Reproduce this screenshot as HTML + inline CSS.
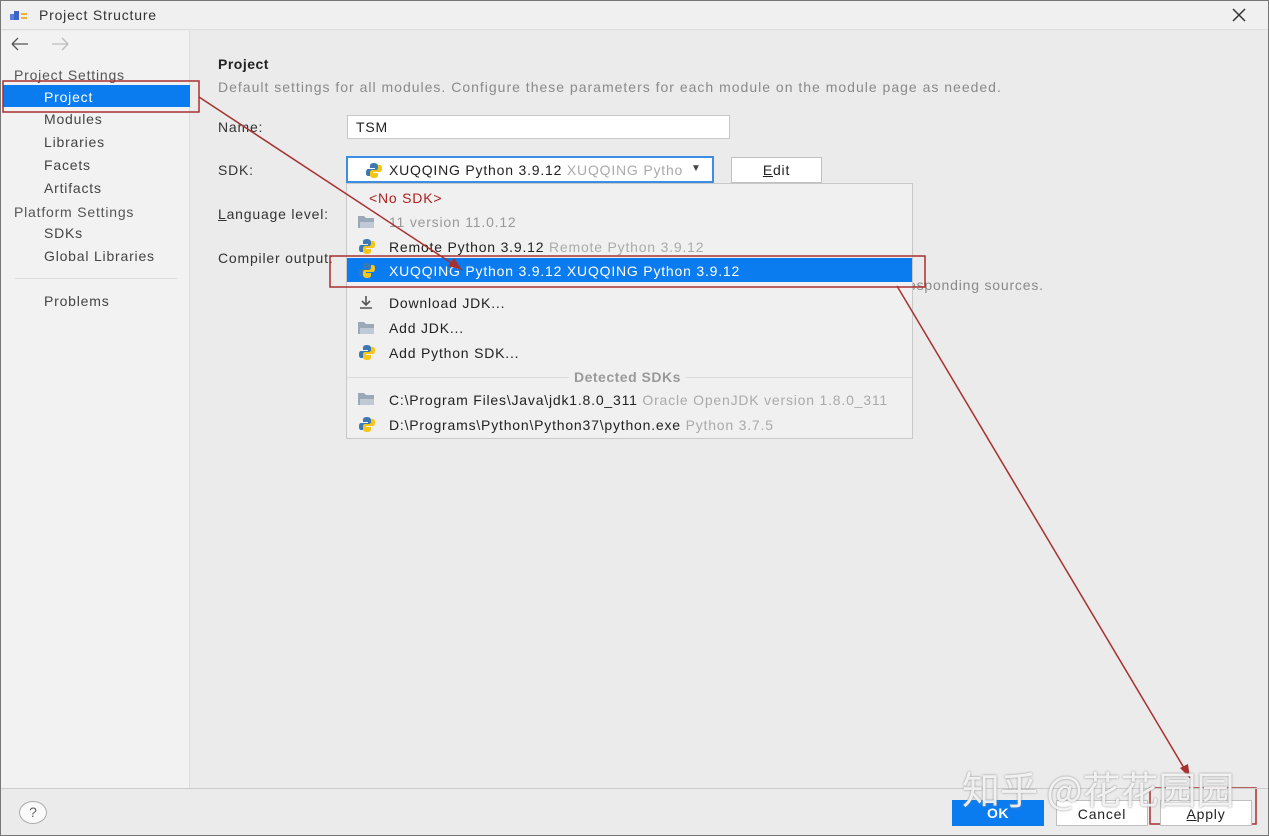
<!DOCTYPE html>
<html><head><meta charset="utf-8"><style>
*{margin:0;padding:0;box-sizing:border-box}
body{width:1269px;height:836px;overflow:hidden;background:#ebebeb;font-family:"Liberation Sans","Noto Sans CJK SC",sans-serif;font-size:14px;letter-spacing:0.8px;color:#222;position:relative}
.a{position:absolute;white-space:nowrap}
.g{color:#8a8a8a}
</style></head><body>
<div class="a" style="left:0;top:0;width:1269px;height:836px;border:1px solid #777"></div>
<div class="a" style="left:1px;top:1px;width:1267px;height:29px;background:#f0f0f0;border-bottom:1px solid #ddd"></div>
<svg class="a" style="left:10px;top:9px" width="20" height="12"><rect x="0" y="5" width="4" height="6" fill="#5b7fd6"/><rect x="4" y="2" width="5" height="9" fill="#3d63c8"/><rect x="11" y="4" width="6" height="2" fill="#f0b030"/><rect x="11" y="8" width="6" height="2" fill="#f0b030"/></svg>
<div class="a" style="left:39px;top:7px;font-size:14px;color:#333">Project Structure</div>
<svg class="a" style="left:1232px;top:8px" width="14" height="14"><path d="M1 1L13 13M13 1L1 13" stroke="#333" stroke-width="1.5"/></svg>
<div class="a" style="left:1px;top:31px;width:189px;height:757px;background:#f2f2f2;border-right:1px solid #ddd"></div>
<svg class="a" style="left:10px;top:37px" width="60" height="14"><path d="M2 7H18M2 7L8 1M2 7L8 13" stroke="#555" stroke-width="1.3" fill="none"/><path d="M42 7H58M58 7L52 1M58 7L52 13" stroke="#bbb" stroke-width="1.3" fill="none"/></svg>
<div class="a" style="left:14px;top:67px;color:#555">Project Settings</div>
<div class="a" style="left:3px;top:85px;width:187px;height:22px;background:#0a7cf0"></div>
<div class="a" style="left:44px;top:89px;color:#fff">Project</div>
<div class="a" style="left:44px;top:111px;color:#444">Modules</div>
<div class="a" style="left:44px;top:134px;color:#444">Libraries</div>
<div class="a" style="left:44px;top:157px;color:#444">Facets</div>
<div class="a" style="left:44px;top:180px;color:#444">Artifacts</div>
<div class="a" style="left:14px;top:204px;color:#555">Platform Settings</div>
<div class="a" style="left:44px;top:225px;color:#444">SDKs</div>
<div class="a" style="left:44px;top:248px;color:#444">Global Libraries</div>
<div class="a" style="left:15px;top:278px;width:162px;height:1px;background:#ddd"></div>
<div class="a" style="left:44px;top:293px;color:#444">Problems</div>

<div class="a" style="left:218px;top:56px;font-weight:bold;letter-spacing:0.5px">Project</div>
<div class="a g" style="left:218px;top:79px;letter-spacing:1px">Default settings for all modules. Configure these parameters for each module on the module page as needed.</div>
<div class="a" style="left:218px;top:119px;color:#333">Name:</div>
<div class="a" style="left:347px;top:115px;width:383px;height:24px;background:#fff;border:1px solid #c8c8c8;padding:3px 8px">TSM</div>
<div class="a" style="left:218px;top:162px;color:#333">SDK:</div>
<div class="a" style="left:346px;top:156px;width:368px;height:27px;background:#fff;border:2px solid #3c8ee0"></div>
<div class="a" style="left:389px;top:162px;color:#222;width:294px;overflow:hidden">XUQQING Python 3.9.12 <span style="color:#aaa">XUQQING Python 3.9.12</span></div>
<div class="a" style="left:691px;top:163px;font-size:10px;color:#444">▼</div>
<div class="a" style="left:731px;top:157px;width:91px;height:26px;background:#fff;border:1px solid #c0c0c0;text-align:center;padding-top:4px"><u>E</u>dit</div>
<div class="a" style="left:218px;top:206px;color:#333"><u>L</u>anguage level:</div>
<div class="a" style="left:218px;top:250px;color:#333">Compiler output:</div>
<div class="a g" style="left:908px;top:277px">esponding sources.</div>

<div class="a" style="left:346px;top:183px;width:567px;height:256px;background:#f0f0f0;border:1px solid #c8c8c8"></div>
<div class="a" style="left:369px;top:190px;color:#b02020">&lt;No SDK&gt;</div>
<div class="a" style="left:389px;top:214px;color:#999">11 version 11.0.12</div>
<div class="a" style="left:389px;top:239px">Remote Python 3.9.12 <span style="color:#aaa">Remote Python 3.9.12</span></div>
<div class="a" style="left:347px;top:258px;width:565px;height:24px;background:#0a7cf0"></div>
<div class="a" style="left:389px;top:263px;color:#fff">XUQQING Python 3.9.12 XUQQING Python 3.9.12</div>
<div class="a" style="left:389px;top:295px">Download JDK...</div>
<div class="a" style="left:389px;top:320px">Add JDK...</div>
<div class="a" style="left:389px;top:345px">Add Python SDK...</div>
<div class="a" style="left:347px;top:377px;width:565px;height:1px;background:#ddd"></div>
<div class="a" style="left:569px;top:369px;background:#f0f0f0;padding:0 5px;color:#999;font-weight:bold;letter-spacing:0.5px">Detected SDKs</div>
<div class="a" style="left:389px;top:392px">C:\Program Files\Java\jdk1.8.0_311 <span style="color:#aaa">Oracle OpenJDK version 1.8.0_311</span></div>
<div class="a" style="left:389px;top:417px">D:\Programs\Python\Python37\python.exe <span style="color:#aaa">Python 3.7.5</span></div>

<svg class="a" style="left:0;top:0" width="1269" height="836">
<defs><g id="p"><path d="M8 1C4 1 4 3 4 4V6H9V7H2C0 7 0 10 0 11C0 13 1 14 2 14H4V11C4 10 5 9 6 9H10C11 9 12 8 12 7V4C12 2 10 1 8 1Z" fill="#3e78b0"/><path d="M8 20C12 20 12 18 12 17V15H7V14H14C16 14 16 11 16 10C16 8 15 7 14 7H12V10C12 11 11 12 10 12H6C5 12 4 13 4 14V17C4 19 6 20 8 20Z" fill="#f5c518" transform="translate(0,-4)"/></g>
<g id="f"><path d="M0 2H6L8 4H16V14H0Z" fill="#9aa8b8"/><rect x="2" y="8" width="14" height="6" fill="#c0cad6"/></g></defs>
<use href="#f" x="358" y="214"/>
<use href="#p" x="359" y="238"/>
<use href="#p" x="359" y="262"/>
<path d="M366 296V305M362 301L366 305L370 301M360 308H372" stroke="#555" stroke-width="1.6" fill="none"/>
<use href="#f" x="358" y="320"/>
<use href="#p" x="359" y="344"/>
<use href="#f" x="358" y="391"/>
<use href="#p" x="359" y="416"/>
<use href="#p" x="366" y="162"/>
<rect x="3" y="81" width="196" height="31" fill="none" stroke="#a83030" stroke-width="1.5"/>
<rect x="330" y="256" width="595" height="31" fill="none" stroke="#a83030" stroke-width="1.5"/>
<rect x="1150" y="788" width="106" height="36" fill="none" stroke="#a83030" stroke-width="1.5"/>
<path d="M199 97L462 270" stroke="#a83030" stroke-width="1.5"/>
<path d="M462 270L448 266L454 258Z" fill="#a83030"/>
<path d="M897 286L1190 778" stroke="#a83030" stroke-width="1.5"/>
<path d="M1190 778L1180 768L1188 764Z" fill="#a83030"/>
</svg>

<div class="a" style="left:1px;top:788px;width:1267px;height:1px;background:#ccc"></div>
<div class="a" style="left:19px;top:801px;width:28px;height:23px;border:1px solid #aaa;border-radius:50%;background:#fafafa;text-align:center;color:#666;font-size:14px;padding-top:2px;letter-spacing:0">?</div>
<div class="a" style="left:952px;top:800px;width:92px;height:26px;background:#0a7cf0;color:#fff;font-weight:bold;text-align:center;padding-top:5px;letter-spacing:0.5px">OK</div>
<div class="a" style="left:1056px;top:800px;width:92px;height:26px;background:#fff;border:1px solid #c0c0c0;text-align:center;padding-top:5px">Cancel</div>
<div class="a" style="left:1160px;top:800px;width:92px;height:26px;background:#fff;border:1px solid #c0c0c0;text-align:center;padding-top:5px"><u>A</u>pply</div>
<div class="a" style="left:962px;top:760px;font-size:38px;letter-spacing:0;color:rgba(255,255,255,0.85);text-shadow:0 0 2px #888;font-family:'Noto Sans CJK SC',sans-serif">知乎 @花花园园</div>
</body></html>
